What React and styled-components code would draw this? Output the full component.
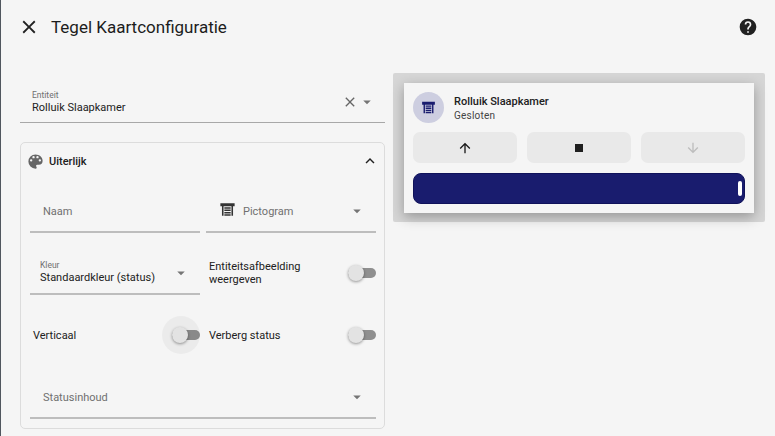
import React from "react";
import styled, { createGlobalStyle } from "styled-components";

const P = {
  close: "M19,6.41L17.59,5L12,10.59L6.41,5L5,6.41L10.59,12L5,17.59L6.41,19L12,13.41L17.59,19L19,17.59L13.41,12L19,6.41Z",
  help: "M15.07,11.25L14.17,12.17C13.45,12.89 13,13.5 13,15H11V14.5C11,13.39 11.45,12.39 12.17,11.67L13.41,10.41C13.78,10.05 14,9.55 14,9C14,7.89 13.1,7 12,7A2,2 0 0,0 10,9H8A4,4 0 0,1 12,5A4,4 0 0,1 16,9C16,9.88 15.64,10.67 15.07,11.25M13,19H11V17H13M12,2A10,10 0 0,0 2,12A10,10 0 0,0 12,22A10,10 0 0,0 22,12C22,6.47 17.5,2 12,2Z",
  palette: "M17.5,12A1.5,1.5 0 0,1 16,10.5A1.5,1.5 0 0,1 17.5,9A1.5,1.5 0 0,1 19,10.5A1.5,1.5 0 0,1 17.5,12M14.5,8A1.5,1.5 0 0,1 13,6.5A1.5,1.5 0 0,1 14.5,5A1.5,1.5 0 0,1 16,6.5A1.5,1.5 0 0,1 14.5,8M9.5,8A1.5,1.5 0 0,1 8,6.5A1.5,1.5 0 0,1 9.5,5A1.5,1.5 0 0,1 11,6.5A1.5,1.5 0 0,1 9.5,8M6.5,12A1.5,1.5 0 0,1 5,10.5A1.5,1.5 0 0,1 6.5,9A1.5,1.5 0 0,1 8,10.5A1.5,1.5 0 0,1 6.5,12M12,3A9,9 0 0,0 3,12A9,9 0 0,0 12,21A1.5,1.5 0 0,0 13.5,19.5C13.5,19.11 13.35,18.76 13.11,18.5C12.88,18.23 12.73,17.88 12.73,17.5A1.5,1.5 0 0,1 14.23,16H16A5,5 0 0,0 21,11C21,6.58 16.97,3 12,3Z",
  up: "M13,20H11V8L5.5,13.5L4.08,12.08L12,4.16L19.92,12.08L18.5,13.5L13,8V20Z",
  down: "M11,4H13V16L18.5,10.5L19.92,11.92L12,19.84L4.08,11.92L5.5,10.5L11,16V4Z",
  stop: "M18,18H6V6H18V18Z",
  chevron: "M7.41,15.41L12,10.83L16.59,15.41L18,14L12,8L6,14L7.41,15.41Z",
  menu: "M7,10L12,15L17,10H7Z",
  shutter: "M3 4H21V8H19V20H17V8H7V20H5V8H3V4M8 9H16V11H8V9M8 12H16V14H8V12M8 15H16V17H8V15M8 18H16V20H8V18Z",
};

const Global = createGlobalStyle`
  html, body { margin: 0; padding: 0; background: #f5f5f5; }
  body { font-family: Roboto, "Liberation Sans", sans-serif; overflow: hidden; }
`;

const Svg = styled.svg`
  display: block;
  flex: none;
  width: ${(p) => p.$size}px;
  height: ${(p) => p.$size}px;
  fill: ${(p) => p.$color};
`;
const Icon = ({ d, size = 24, color = "#212121" }) => (
  <Svg viewBox="0 0 24 24" $size={size} $color={color}><path d={d} /></Svg>
);

const Page = styled.div`
  width: 775px;
  height: 436px;
  box-sizing: border-box;
  border-left: 1px solid #50565e;
  background: #f5f5f5;
  color: #212121;
  overflow: hidden;
`;
const Header = styled.header`
  height: 54px;
  display: flex;
  align-items: center;
  padding: 0 17px 0 17px;
  gap: 11px;
`;
const Title = styled.h1`
  flex: 1;
  margin: 0;
  font-size: 17px;
  font-weight: 400;
  color: #1c1c1c;
`;
const Content = styled.div`
  display: grid;
  grid-template-columns: 365px 372px;
  column-gap: 8px;
  padding: 0 0 0 19px;
  align-items: start;
`;
const LeftColumn = styled.div`
  display: flex;
  flex-direction: column;
  padding-top: 31px;
`;
const EntityField = styled.div`
  height: 38px;
  box-sizing: border-box;
  display: flex;
  align-items: center;
  border-bottom: 1px solid #a8a8a8;
  padding: 0 9px 3px 12px;
`;
const FieldText = styled.div`
  flex: 1;
  min-width: 0;
  display: flex;
  flex-direction: column;
`;
const SmallLabel = styled.span`
  font-size: 8.5px;
  line-height: 10px;
  color: #6f6f6f;
`;
const Value = styled.span`
  font-size: 11px;
  line-height: 15px;
  color: #212121;
`;
const Panel = styled.section`
  margin-top: 19px;
  height: 287px;
  box-sizing: border-box;
  border: 1px solid #dcdcdc;
  border-radius: 5px;
  padding: 0 9px;
`;
const PanelHead = styled.div`
  height: 36px;
  display: flex;
  align-items: center;
  gap: 4px;
  margin: 0 -4px 0 -4px;
`;
const PanelTitle = styled.span`
  flex: 1;
  font-size: 11px;
  font-weight: 500;
  color: #212121;
`;
const Grid = styled.div`
  display: grid;
  grid-template-columns: 170px 170px;
  column-gap: 6px;
  grid-template-rows: 54px 62px 62px 62px;
`;
const Field = styled.div`
  grid-column: ${(p) => (p.$wide ? "1 / -1" : "auto")};
  align-self: end;
  height: 42px;
  box-sizing: border-box;
  display: flex;
  align-items: center;
  border-bottom: 2px solid #bdbdbd;
  padding: ${(p) => p.$pad || "0 10px 0 13px"};
`;
const Placeholder = styled.span`
  flex: 1;
  font-size: 11px;
  color: #707070;
`;
const IconRaise = styled.span`
  display: block;
  margin: -4px 6px 0 0;
`;
const ToggleRow = styled.div`
  align-self: center;
  display: flex;
  align-items: center;
  justify-content: space-between;
  padding: 18px 0 0 3px;
  font-size: 11px;
  line-height: 13px;
  color: #212121;
`;
const Toggle = styled.span`
  position: relative;
  display: block;
  width: 28px;
  height: 10px;
  background: #8f8f8f;
  border-radius: 5px;
  flex: none;
  &::before {
    content: "";
    display: ${(p) => (p.$halo ? "block" : "none")};
    position: absolute;
    left: -10px;
    top: -14px;
    width: 38px;
    height: 38px;
    border-radius: 50%;
    background: rgba(0, 0, 0, 0.04);
  }
  &::after {
    content: "";
    position: absolute;
    left: 0;
    top: -3px;
    width: 16px;
    height: 16px;
    border-radius: 50%;
    background: #e3e3e3;
    box-shadow: 0 1px 3px rgba(0, 0, 0, 0.4);
  }
`;
const PreviewBox = styled.aside`
  margin-top: 19px;
  height: 149px;
  box-sizing: border-box;
  padding: 10px 11px;
  background: #d6d6d6;
  border-radius: 2px;
`;
const Card = styled.div`
  height: 130px;
  box-sizing: border-box;
  padding: 9px;
  background: #f5f5f5;
  box-shadow: 0 4px 12px rgba(0, 0, 0, 0.3);
  display: flex;
  flex-direction: column;
`;
const CardHead = styled.div`
  height: 31px;
  display: flex;
  align-items: center;
  gap: 10px;
`;
const Badge = styled.div`
  width: 31px;
  height: 31px;
  border-radius: 50%;
  background: #cdcee0;
  display: flex;
  align-items: center;
  justify-content: center;
`;
const CardText = styled.div`
  display: flex;
  flex-direction: column;
  padding-top: 2px;
`;
const CardName = styled.span`
  font-size: 11px;
  line-height: 14px;
  font-weight: 500;
  color: #212121;
`;
const CardState = styled.span`
  font-size: 10px;
  line-height: 14px;
  letter-spacing: 0.2px;
  color: #444;
`;
const Buttons = styled.div`
  margin-top: 9px;
  display: grid;
  grid-template-columns: repeat(3, 1fr);
  gap: 10px;
`;
const Btn = styled.div`
  height: 31px;
  border-radius: 7px;
  background: #e9e9e9;
  display: flex;
  align-items: center;
  justify-content: center;
`;
const Slider = styled.div`
  position: relative;
  margin-top: 10px;
  height: 31px;
  box-sizing: border-box;
  border-radius: 8px;
  background: #191c6e;
  border: 1px solid #10125a;
`;
const Handle = styled.span`
  position: absolute;
  right: 2px;
  top: 7px;
  width: 4px;
  height: 15px;
  background: #fff;
  border-radius: 2px;
`;

export default function App() {
  return (
    <Page>
      <Global />
      <Header>
        <Icon d={P.close} size={22} />
        <Title>Tegel Kaartconfiguratie</Title>
        <Icon d={P.help} size={20} />
      </Header>
      <Content>
        <LeftColumn>
          <EntityField>
            <FieldText>
              <SmallLabel>Entiteit</SmallLabel>
              <Value>Rolluik Slaapkamer</Value>
            </FieldText>
            <Icon d={P.close} size={16} color="#666" />
            <Icon d={P.menu} size={18} color="#757575" />
          </EntityField>
          <Panel>
            <PanelHead>
              <Icon d={P.palette} size={19} color="#666" />
              <PanelTitle>Uiterlijk</PanelTitle>
              <Icon d={P.chevron} size={18} />
            </PanelHead>
            <Grid>
              <Field><Placeholder>Naam</Placeholder></Field>
              <Field $pad="0 10px 0 12px">
                <IconRaise><Icon d={P.shutter} size={19} color="#333" /></IconRaise>
                <Placeholder>Pictogram</Placeholder>
                <Icon d={P.menu} size={18} color="#757575" />
              </Field>
              <Field $pad="0 10px 1px 10px">
                <FieldText>
                  <SmallLabel>Kleur</SmallLabel>
                  <Value>Standaardkleur (status)</Value>
                </FieldText>
                <Icon d={P.menu} size={18} color="#757575" />
              </Field>
              <ToggleRow>
                <span>Entiteitsafbeelding<br />weergeven</span>
                <Toggle />
              </ToggleRow>
              <ToggleRow>
                <span>Verticaal</span>
                <Toggle $halo />
              </ToggleRow>
              <ToggleRow>
                <span>Verberg status</span>
                <Toggle />
              </ToggleRow>
              <Field $wide>
                <Placeholder>Statusinhoud</Placeholder>
                <Icon d={P.menu} size={18} color="#757575" />
              </Field>
            </Grid>
          </Panel>
        </LeftColumn>
        <PreviewBox>
          <Card>
            <CardHead>
              <Badge><Icon d={P.shutter} size={17} color="#191c6e" /></Badge>
              <CardText>
                <CardName>Rolluik Slaapkamer</CardName>
                <CardState>Gesloten</CardState>
              </CardText>
            </CardHead>
            <Buttons>
              <Btn><Icon d={P.up} size={16} color="#1a1a1a" /></Btn>
              <Btn><Icon d={P.stop} size={16} color="#1f1f1f" /></Btn>
              <Btn><Icon d={P.down} size={16} color="#bdbdbd" /></Btn>
            </Buttons>
            <Slider><Handle /></Slider>
          </Card>
        </PreviewBox>
      </Content>
    </Page>
  );
}
